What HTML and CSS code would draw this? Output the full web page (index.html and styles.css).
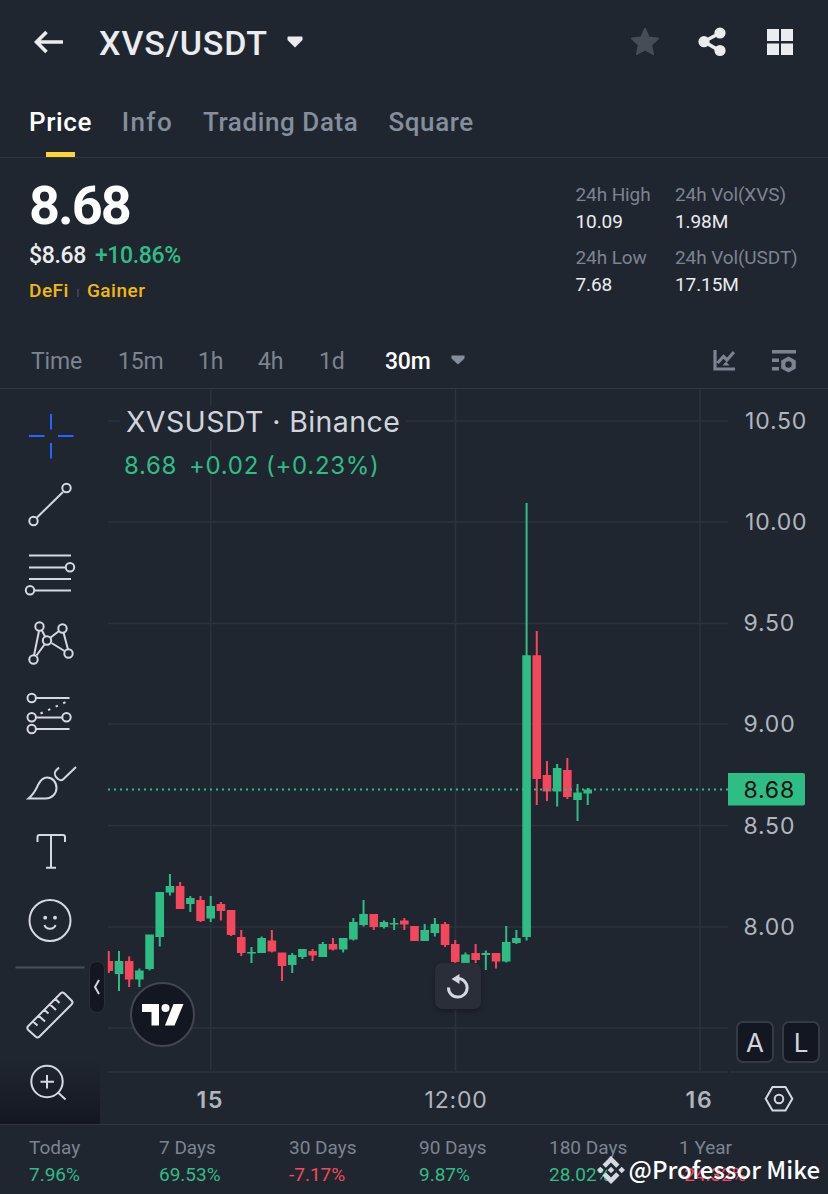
FILE: index.html
```html
<!DOCTYPE html>
<html lang="en">
<head>
  <meta charset="UTF-8">
  <meta name="viewport" content="width=device-width, initial-scale=1.0">
  <title>XVS/USDT</title>
  <link rel="stylesheet" href="styles.css">
</head>
<body>
<header class="header">
  <svg class="back" width="30" height="24" viewBox="0 0 30 24"><path d="M29 12H3M12.5 2L2.5 12l10 10" fill="none" stroke="currentColor" stroke-width="3.6"/></svg>
  <h1 class="pair">XVS/USDT</h1>
  <svg class="caret" width="16" height="12" viewBox="0 0 16 12"><path d="M.5 1.5Q.5.5 1.500.5h13q1 0 1 1V4L8 11.500.5 4z" fill="currentColor"/></svg>
  <div class="header-icons">
    <svg width="30" height="30" viewBox="0 0 30 30"><path d="M15 2l3.800 8.600 9.200.9-6.900 6.200L23 27l-8-4.500L7 27l1.900-9.300L2 11.500l9.200-.9z" fill="#474d57" stroke="#474d57" stroke-width="2" stroke-linejoin="round"/></svg>
    <svg width="30" height="30" viewBox="0 0 30 30"><path d="M23 6L7 14.500 23 24" fill="none" stroke="currentColor" stroke-width="3.600"/><circle cx="23" cy="6" r="5.600" fill="currentColor"/><circle cx="7" cy="14.700" r="5.600" fill="currentColor"/><circle cx="23" cy="23.500" r="5.600" fill="currentColor"/></svg>
    <svg class="grid-icon" width="28" height="28" viewBox="0 0 28 28"><path d="M1 1h12v12H1zM15 1h12v12H15zM1 15.500h12v11.500H1zM15 15.500h12v11.500H15z" fill="currentColor"/></svg>
  </div>
</header>

<nav class="tabs">
  <a class="tab active">Price</a>
  <a class="tab info">Info</a>
  <a class="tab">Trading Data</a>
  <a class="tab">Square</a>
</nav>

<section class="summary">
  <div class="price-box">
    <div class="last-price">8.68</div>
    <div class="fiat"><span>$8.68</span><span class="up">+10.86%</span></div>
    <div class="tags"><span>DeFi</span><i></i><span>Gainer</span></div>
  </div>
  <dl class="stats">
    <div><dt>24h High</dt><dd>10.09</dd></div>
    <div><dt>24h Vol(XVS)</dt><dd>1.98M</dd></div>
    <div><dt>24h Low</dt><dd>7.68</dd></div>
    <div><dt>24h Vol(USDT)</dt><dd>17.15M</dd></div>
  </dl>
</section>

<div class="intervals">
  <span class="i-time">Time</span>
  <span class="i-15m">15m</span>
  <span class="i-1h">1h</span>
  <span class="i-4h">4h</span>
  <span class="i-1d">1d</span>
  <span class="i-30m active">30m</span>
  <svg class="more" width="14" height="10" viewBox="0 0 14 10"><path d="M.5.500h13v3L7 9.500.500 3.500z" fill="#848e9c"/></svg>
  <div class="interval-icons">
    <svg width="22" height="22" viewBox="0 0 22 22"><path d="M2 0v19h20M4.500 13l6-6.500 3.500 3.500 7-8" fill="none" stroke="currentColor" stroke-width="3.200"/><path d="M9.500 15.500l3.500-4 3.500 4z" fill="currentColor"/></svg>
    <svg width="26" height="24" viewBox="0 0 26 24"><path d="M1 1h24v3.500H1zM1 9.500h7V13H1zM1 18h7v3.500H1z" fill="currentColor"/><path d="M17.500 7.500l7.300 4v8l-7.300 4-7.300-4v-8zM17.500 12.300a3.200 3.200 0 1 0 0 6.400 3.200 3.200 0 0 0 0-6.400z" fill="currentColor" fill-rule="evenodd"/></svg>
  </div>
</div>

<main class="chart">
  <aside class="tools">
    <svg viewBox="0 0 100 735" width="100" height="735">
      <g class="cross"><path d="M51 25v15.500M51 54v15.500M29 47h15.500M58 47h15.500"/></g>
      <g class="ink">
        <!-- trend line -->
        <path d="M37 128.500L63 103"/><circle cx="33.500" cy="132" r="4.200"/><circle cx="66.500" cy="99" r="4.200"/>
        <!-- fib levels -->
        <path d="M29 166.500h42M29 178.500h37M29 190h42M34 201.500h37"/><circle cx="70" cy="178.300" r="4.200"/><circle cx="30" cy="201.300" r="4.200"/>
        <!-- pattern -->
        <path d="M34 266.500L39 242M42 241.500l3 6M44.500 255.500l-8 11M50 249l9-7M51.500 254l13 8M63.500 243.500l4.500 17"/>
        <circle cx="39.500" cy="237.500" r="4.200"/><circle cx="62.500" cy="239.500" r="4.200"/><circle cx="47" cy="251.500" r="4.200"/><circle cx="33.500" cy="270.500" r="4.200"/><circle cx="68.500" cy="264.500" r="4.200"/>
        <!-- forecast -->
        <path d="M36 309h33.500M36 328.500h26M36 340h33.500"/><circle cx="31.700" cy="309" r="4.200"/><circle cx="31.700" cy="328.300" r="4.200"/><circle cx="66.500" cy="328.300" r="4.200"/><circle cx="31.700" cy="340" r="4.200"/>
        <path d="M40.500 324.500L67 312.500" stroke-dasharray="2.500 5.800"/>
        <!-- brush -->
        <path d="M28.500 409.500c6-5 7.500-9 9.500-13.500 2.500-5 5-7.500 9-7.500 5.500 0 9.500 4.500 9.500 10.500s-5 10.500-11 10.500zM59 378.500l-3 3c-1.500 1.500-1.500 4.500 0 6.500l2 2c2 1.500 4 1.500 5.500 0L76 378"/>
        <!-- text -->
        <path d="M37.500 453v-5q0-2 2-2h23.500q2 0 2 2v5M51 446v32.500M46 478.800h10"/>
        <!-- emoji -->
        <circle cx="50" cy="531.500" r="20.500"/><path d="M44.500 536c1.500 5 9.500 5 11 0"/><circle class="dot" cx="45.200" cy="528.700" r="1.900"/><circle class="dot" cx="55" cy="528.700" r="1.900"/>
        <!-- ruler -->
        <path d="M28.300 637l32.200-32.500q2-2 4 0l7 7q2 2 0 4L39.500 647.500q-2 2-4 0l-7.200-6.500q-2-2 0-4zM33 632.500l4.500 4M39 627l6 5.500M44.500 621l4 3.500M50 615.500l6 5.500M55.500 610l4 4"/>
        <!-- zoom -->
        <circle cx="47" cy="692.500" r="15.700"/><path d="M47 686v13.500M40.500 692.700h13.500M58 703.500l7.500 7"/>
      </g>
      <path d="M15.500 578.500h69" stroke="#4a4f5a" stroke-width="2"/>
    </svg>
  </aside>
  <div class="plot">
    <svg viewBox="100 389 728 735" width="728" height="735">
      <g class="grid">
        <path d="M210.700 389V1071M455.500 389V1071M700 389V1071"/>
        <path d="M108 421H728M108 522H728M108 623.500H728M108 724H728M108 825.500H728M108 927H728M108 1028H728M108 1072H728M730 1072H828"/>
      </g>
      <g id="candles"></g>
      <path d="M108 789.500H728" stroke="#2ebd85" stroke-width="2" stroke-dasharray="2 4"/>
      <path d="M120 405H406V440H120z" fill="#202630"/>
      <text class="symbol" x="126" y="432">XVSUSDT · Binance</text>
      <g class="quote"><text x="124" y="474">8.68</text><text x="189" y="474">+0.02</text><text x="266" y="474">(+0.23%)</text></g>
      <g class="axis">
        <text x="745" y="429">10.50</text>
        <text x="745" y="530">10.00</text>
        <text x="743.500" y="631">9.50</text>
        <text x="743.500" y="732">9.00</text>
        <text x="743.500" y="833.500">8.50</text>
        <text x="743.500" y="935">8.00</text>
        <path d="M728 773h75q2 0 2 2v28.500q0 2-2 2h-75z" fill="#2ebd85"/>
        <text class="current" x="743.500" y="797.500">8.68</text>
        <text class="day" x="196.500" y="1107.500">15</text>
        <text x="424.500" y="1107.500">12:00</text>
        <text class="day" x="685.500" y="1107.500">16</text>
      </g>
      <g class="ink"><path d="M772.500 1087h13l6.800 11.800-6.800 11.800h-13l-6.800-11.800z"/><circle cx="779" cy="1099" r="4.300"/></g>
    </svg>
    <div class="fold"><svg width="8" height="16" viewBox="0 0 8 16"><path d="M6 1L2 8l4 7" fill="none" stroke="#d1d4dc" stroke-width="2"/></svg></div>
    <div class="tv-logo"><svg width="42" height="22" viewBox="0 0 42 22"><path d="M0 0h17v21.500H9.500V8H0zM31.500 0h10L32.500 21.500H23z" fill="#fff"/><circle cx="23.500" cy="4" r="4" fill="#fff"/></svg></div>
    <button class="reset"><svg width="24" height="26" viewBox="0 0 24 26"><path d="M2.500 14.500a9.300 9.300 0 1 0 9.300-9" fill="none" stroke="#d5d8e0" stroke-width="3"/><path d="M5.500 6L13.500 1v10z" fill="#d5d8e0"/></svg></button>
    <div class="scale-buttons"><button>A</button><button>L</button></div>
  </div>
</main>

<footer class="periods">
  <div><span>Today</span><b class="up">7.96%</b></div>
  <div><span>7 Days</span><b class="up">69.53%</b></div>
  <div><span>30 Days</span><b class="down">-7.17%</b></div>
  <div><span>90 Days</span><b class="up">9.87%</b></div>
  <div><span>180 Days</span><b class="up">28.02%</b></div>
  <div><span>1 Year</span><b class="down">-24.32%</b></div>
</footer>

<div class="watermark">
  <svg width="28" height="28" viewBox="0 0 28 28"><path d="M14 0l8.500 8.500-3.300 3.300L14 6.600l-5.200 5.200-3.300-3.300zM14 28l8.500-8.500-3.300-3.300L14 21.400l-5.200-5.200-3.300 3.300zM14 10.700l3.300 3.300-3.300 3.300-3.300-3.300zM3.300 10.700L6.600 14l-3.300 3.300L0 14zM24.700 10.700L28 14l-3.300 3.300-3.300-3.300z" fill="#d5d8e0"/></svg>
  <span>@Professor Mike</span>
</div>

<script src="candles.js"></script>
</body>
</html>
```
FILE: styles.css
```css
body {
  margin: 0;
  background: #202630;
  color: #eaecef;
  font-family: Roboto, "Noto Sans", sans-serif;
  height: 1194px;
  position: relative;
  overflow: hidden;
}

svg {
  display: block;
  flex: none;
}

.header {
  display: flex;
  align-items: center;
  height: 84px;
  padding: 0 34px;
}

.pair {
  margin: 1px 0 0 35px;
  width: 168px;
  font-size: 34px;
  font-weight: 500;
  letter-spacing: 0.8px;
  white-space: nowrap;
}

.caret {
  margin-left: 20px;
}

.header-icons {
  display: flex;
  align-items: center;
  gap: 37px;
  margin-left: auto;
}

.grid-icon {
  margin-left: 2px;
}

.tabs {
  display: flex;
  gap: 30px;
  height: 73px;
  padding: 0 29px;
  border-bottom: 1px solid #2f363f;
}

.tab {
  display: flex;
  flex-direction: column;
  align-items: center;
  justify-content: space-between;
  padding-top: 19px;
  font-size: 26px;
  line-height: 38px;
  font-weight: 500;
  letter-spacing: 0.6px;
  color: #848e9c;
  white-space: nowrap;
}

.tab.info {
  width: 51px;
  letter-spacing: 1.4px;
}

.tab.active {
  color: #fff;
}

.tab.active::after {
  content: "";
  width: 29px;
  height: 5px;
  background: #fcd535;
}

.summary {
  display: flex;
  justify-content: space-between;
  height: 177px;
  padding: 0 29px;
  box-sizing: border-box;
}

.last-price {
  margin-top: 16px;
  font-size: 54px;
  line-height: 64px;
  font-weight: 700;
  letter-spacing: -2px;
  color: #fff;
}

.fiat {
  display: flex;
  gap: 9px;
  margin-top: 1px;
  font-size: 23px;
  line-height: 34px;
  font-weight: 500;
  letter-spacing: -0.35px;
}

.tags {
  display: flex;
  align-items: center;
  gap: 8px;
  margin-top: 5px;
  font-size: 19px;
  line-height: 26px;
  font-weight: 500;
  letter-spacing: 0.5px;
  color: #f0b90b;
}

.tags i {
  width: 2px;
  height: 8px;
  margin-top: 4px;
  background: #3a414c;
}

.up {
  color: #2ebd85;
}

.down {
  color: #f6465d;
}

.stats {
  display: grid;
  grid-template-columns: 99.5px 124px;
  grid-auto-rows: 63px;
  margin: 23px 0 0;
  font-size: 19px;
  line-height: 27px;
  letter-spacing: -0.1px;
  white-space: nowrap;
}

.stats dt {
  color: #7c8491;
}

.stats dd {
  margin: 0;
}

.intervals {
  display: flex;
  align-items: center;
  height: 53px;
  padding: 0 31px;
  border-bottom: 1px solid #2f363f;
  font-size: 23px;
  letter-spacing: -0.2px;
  color: #7c8491;
}

.intervals .more {
  margin-top: -3px;
}

.i-time {
  width: 87px;
}

.i-15m {
  width: 80px;
}

.i-1h {
  width: 60px;
}

.i-4h {
  width: 61px;
}

.i-1d {
  width: 66px;
}

.i-30m {
  width: 66px;
}

.intervals .active {
  color: #fff;
  font-weight: 500;
}

.interval-icons {
  display: flex;
  align-items: center;
  gap: 36px;
  margin: -2px 0 0 auto;
}

.chart {
  display: flex;
  height: 735px;
  border-bottom: 1px solid #2f363f;
}

.tools {
  width: 100px;
  background: linear-gradient(#202630 0 670px, #131722);
}

.ink path,
.ink circle {
  fill: none;
  stroke: #d5d8e0;
  stroke-width: 2;
}

.ink .dot {
  fill: #d5d8e0;
  stroke: none;
}

.cross path {
  stroke: #2962ff;
  stroke-width: 2;
}

.plot {
  position: relative;
  width: 728px;
}

.grid path {
  stroke: #2d333d;
  stroke-width: 1.5;
}

text {
  font-family: Inter, Roboto, sans-serif;
}

.symbol {
  font-size: 28.5px;
  letter-spacing: 0.4px;
  fill: #d1d4dc;
}

.quote {
  font-size: 24px;
  letter-spacing: 0.7px;
  fill: #2ebd85;
}

.axis {
  font-size: 23px;
  letter-spacing: 0.8px;
  fill: #b2b5be;
}

.axis .current {
  fill: #0b0e11;
}

.axis .day {
  font-weight: 600;
  letter-spacing: 1.8px;
}

.fold {
  position: absolute;
  left: -11px;
  top: 572px;
  display: flex;
  align-items: center;
  justify-content: center;
  width: 14px;
  height: 50px;
  border: 1px solid #2a2e39;
  border-radius: 8px;
  background: #131722;
}

.tv-logo {
  position: absolute;
  left: 30px;
  top: 593px;
  display: flex;
  align-items: center;
  justify-content: center;
  width: 61px;
  height: 61px;
  border: 2px solid #434651;
  border-radius: 50%;
  background: #131722;
}

.reset {
  position: absolute;
  left: 335px;
  top: 574px;
  display: flex;
  align-items: center;
  justify-content: center;
  width: 46px;
  height: 46px;
  padding: 0;
  border: 0;
  border-radius: 7px;
  background: #2a2e39;
  box-shadow: 0 2px 5px rgba(0, 0, 0, 0.35);
}

.scale-buttons {
  position: absolute;
  left: 636px;
  top: 632px;
  display: flex;
  gap: 8px;
}

.scale-buttons button {
  width: 38px;
  height: 42px;
  padding: 0;
  box-sizing: border-box;
  border: 2px solid #363a45;
  border-radius: 7px;
  background: #131722;
  color: #d1d4dc;
  font: 26px Inter, sans-serif;
}

.periods {
  display: grid;
  grid-template-columns: repeat(6, 130px);
  padding: 9px 0 0 29px;
  font-size: 19px;
  line-height: 27px;
}

.periods div {
  display: flex;
  flex-direction: column;
}

.periods span {
  color: #7c8491;
}

.periods b {
  font-weight: 400;
}

.watermark {
  position: absolute;
  right: 8px;
  bottom: 6px;
  display: flex;
  align-items: center;
  gap: 4px;
  color: #fff;
  font: 500 24px/38px "Noto Sans CJK SC", "Noto Sans", sans-serif;
  white-space: nowrap;
}

.watermark svg {
  margin-top: 2px;
}
```
FILE: candles.js
```js
// side, high, body top, body bottom, low
const candles = [
  ['r', 951, 961, 971, 973], ['g', 951, 961, 974, 991], ['r', 956.5, 961, 979.5, 987],
  ['g', 968.5, 970.5, 979.5, 987], ['g', 934.5, 934.5, 969, 970.5], ['g', 892, 892, 937, 946.5],
  ['g', 874, 886, 892.5, 895.5], ['r', 882, 886, 909, 909], ['g', 896, 898, 904, 912],
  ['r', 896, 900, 921, 922], ['g', 896, 906, 918.5, 922], ['r', 902, 904, 911, 920.5],
  ['r', 910, 910, 935, 936], ['r', 930, 937, 953, 956], ['g', 947, 952, 953.5, 963],
  ['g', 936.5, 938, 953, 953], ['r', 930, 940.5, 951.5, 952.5], ['r', 952.5, 952.5, 966, 981],
  ['g', 953, 955, 965, 973], ['g', 949, 949, 957, 959], ['r', 949, 951, 955.5, 961],
  ['g', 942, 944, 957, 957], ['r', 938, 944, 949.5, 950.5], ['g', 938, 938, 949.5, 952.5],
  ['g', 918, 922, 939.5, 940.5], ['g', 900, 914, 925, 926.5], ['r', 914, 914, 927, 930],
  ['g', 920.5, 922, 927, 928.5], ['g', 918, 923, 924.5, 930], ['r', 918, 920.5, 924.5, 930],
  ['r', 926, 926, 941, 941], ['g', 924, 930, 941, 941], ['g', 918, 924, 933, 936.5],
  ['r', 922, 924, 945, 947], ['r', 940, 944, 962, 963], ['g', 952.5, 954.5, 963, 965],
  ['r', 944, 953, 960, 963], ['g', 950.5, 953, 955, 970], ['r', 953, 953, 961.5, 968.5],
  ['g', 926, 942, 961.5, 962.5], ['g', 930, 938, 943, 944], ['g', 503, 655.3, 937, 940.5],
  ['r', 631, 655.3, 779, 805], ['r', 761, 775, 791.5, 801], ['g', 764, 768, 791.5, 806.5],
  ['r', 758, 770, 797, 799], ['g', 784, 792.5, 800, 821], ['g', 788, 789.5, 793.5, 805]
];

const step = 10.19;
const firstX = 108.8;
const colors = { g: '#2ebd85', r: '#f6465d' };

document.getElementById('candles').innerHTML = candles.map(([side, high, top, bottom, low], i) => {
  const x = firstX + i * step;
  const left = Math.max(x - 4.3, 108);
  return `<path fill="${colors[side]}" d="M${x - 1} ${high}h2V${low}h-2zM${left} ${top}H${x + 4.3}V${bottom}H${left}z"/>`;
}).join('');
```
